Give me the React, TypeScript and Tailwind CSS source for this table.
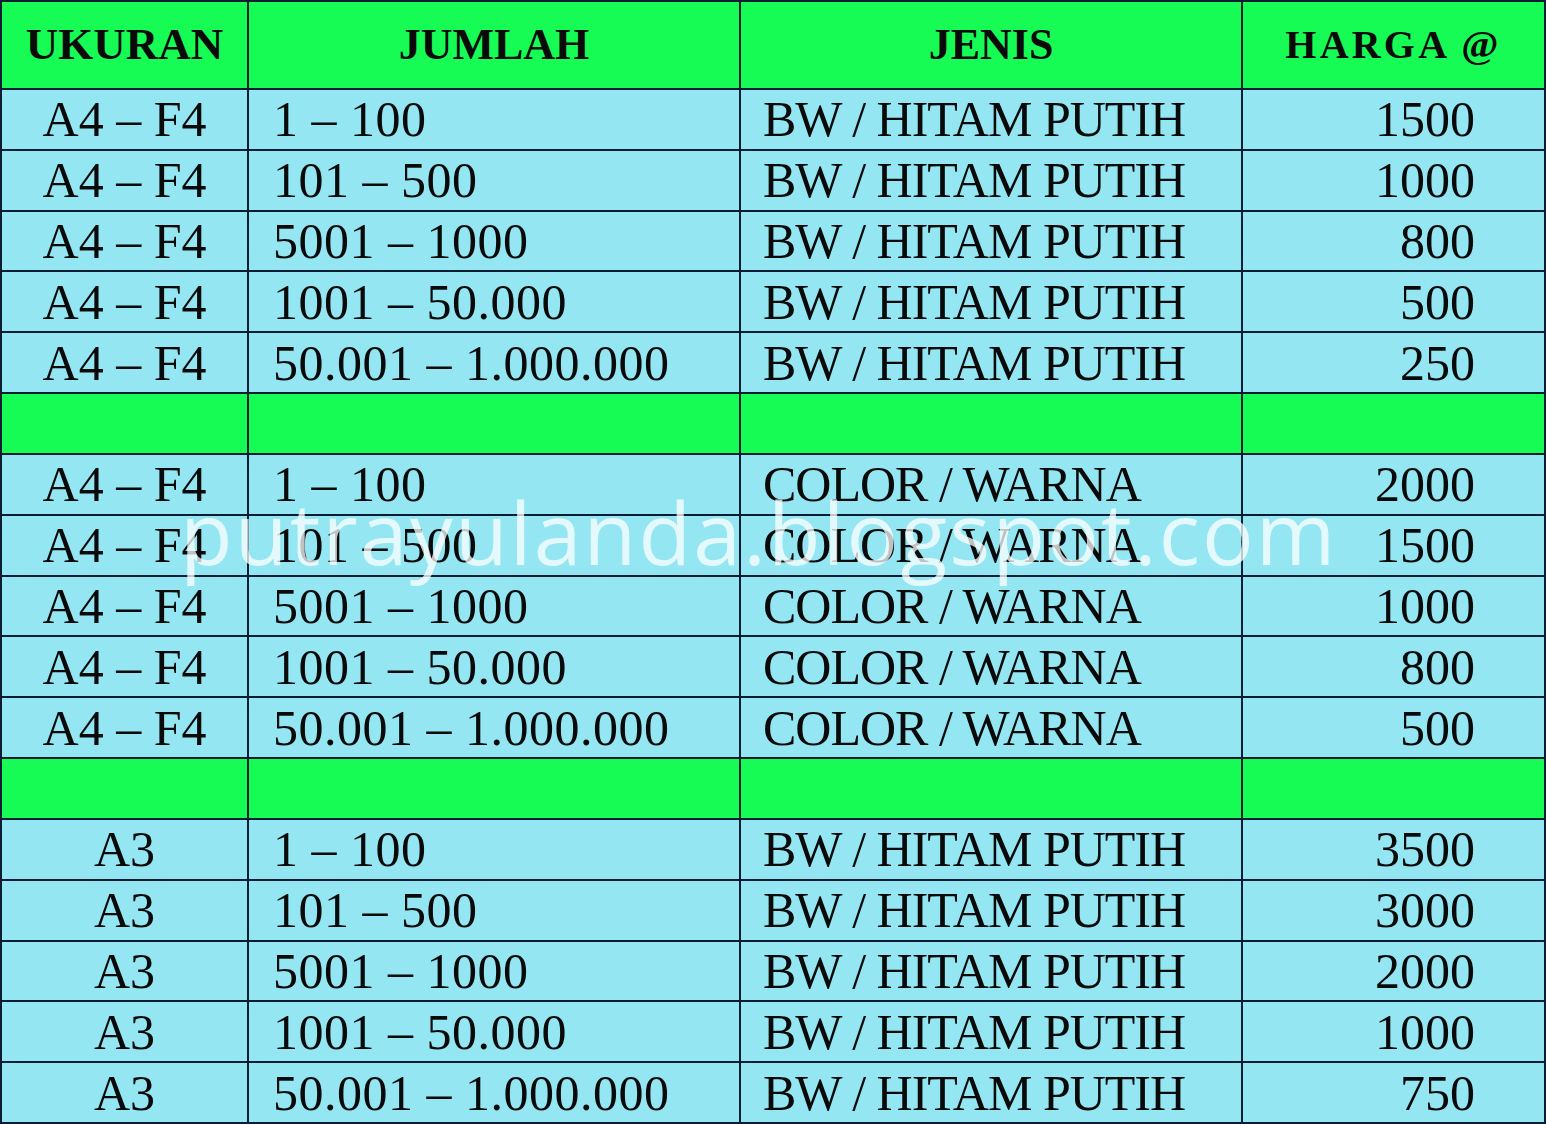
const rows: ([string, string, string, string] | null)[] = [
  ["A4 – F4", "1 – 100", "BW / HITAM PUTIH", "1500"],
  ["A4 – F4", "101 – 500", "BW / HITAM PUTIH", "1000"],
  ["A4 – F4", "5001 – 1000", "BW / HITAM PUTIH", "800"],
  ["A4 – F4", "1001 – 50.000", "BW / HITAM PUTIH", "500"],
  ["A4 – F4", "50.001 – 1.000.000", "BW / HITAM PUTIH", "250"],
  null,
  ["A4 – F4", "1 – 100", "COLOR / WARNA", "2000"],
  ["A4 – F4", "101 – 500", "COLOR / WARNA", "1500"],
  ["A4 – F4", "5001 – 1000", "COLOR / WARNA", "1000"],
  ["A4 – F4", "1001 – 50.000", "COLOR / WARNA", "800"],
  ["A4 – F4", "50.001 – 1.000.000", "COLOR / WARNA", "500"],
  null,
  ["A3", "1 – 100", "BW / HITAM PUTIH", "3500"],
  ["A3", "101 – 500", "BW / HITAM PUTIH", "3000"],
  ["A3", "5001 – 1000", "BW / HITAM PUTIH", "2000"],
  ["A3", "1001 – 50.000", "BW / HITAM PUTIH", "1000"],
  ["A3", "50.001 – 1.000.000", "BW / HITAM PUTIH", "750"],
];

const green = "bg-[#16fc55]";
const blue = "bg-[#94e6f2]";

export default function App() {
  return (
    <div className="relative w-[1546px] h-[1124px] overflow-hidden text-[#0a0a0a]" style={{ fontFamily: '"Liberation Serif", "Times New Roman", serif' }}>
      <div className="grid h-full grid-cols-[245px_490px_500px_1fr] grid-rows-[86px_repeat(17,1fr)] gap-[2px] p-[2px] bg-[#0b1d33]">
        {/* Header */}
        <div className={`${green} flex items-center justify-center text-[45px] font-bold`}>UKURAN</div>
        <div className={`${green} flex items-center justify-center text-[44px] font-bold`}>JUMLAH</div>
        <div className={`${green} flex items-center justify-center text-[44px] font-bold`}>JENIS</div>
        <div className={`${green} flex items-center justify-center text-[40px] font-bold tracking-[0.08em]`}>HARGA @</div>

        {rows.map((r, i) =>
          r === null ? (
            [0, 1, 2, 3].map((c) => <div key={`${i}-${c}`} className={green} />)
          ) : (
            [
              <div key={`${i}-0`} className={`${blue} flex items-center justify-center text-[50px] leading-none`}>{r[0]}</div>,
              <div key={`${i}-1`} className={`${blue} flex items-center pl-[24px] text-[50px] leading-none tracking-[0.01em]`}>{r[1]}</div>,
              <div key={`${i}-2`} className={`${blue} flex items-center pl-[22px] text-[50px] leading-none tracking-[-0.02em]`}>{r[2]}</div>,
              <div key={`${i}-3`} className={`${blue} flex items-center justify-end pr-[69px] text-[50px] leading-none`}>{r[3]}</div>,
            ]
          )
        )}
      </div>

      {/* Watermark */}
      <div
        className="pointer-events-none absolute left-[180px] top-[489px] text-[86px] font-normal leading-none tracking-[0.025em] text-white/75 whitespace-nowrap"
        style={{ fontFamily: '"Open Sans", "Noto Sans", sans-serif' }}
      >
        putrayulanda.blogspot.com
      </div>
    </div>
  );
}
